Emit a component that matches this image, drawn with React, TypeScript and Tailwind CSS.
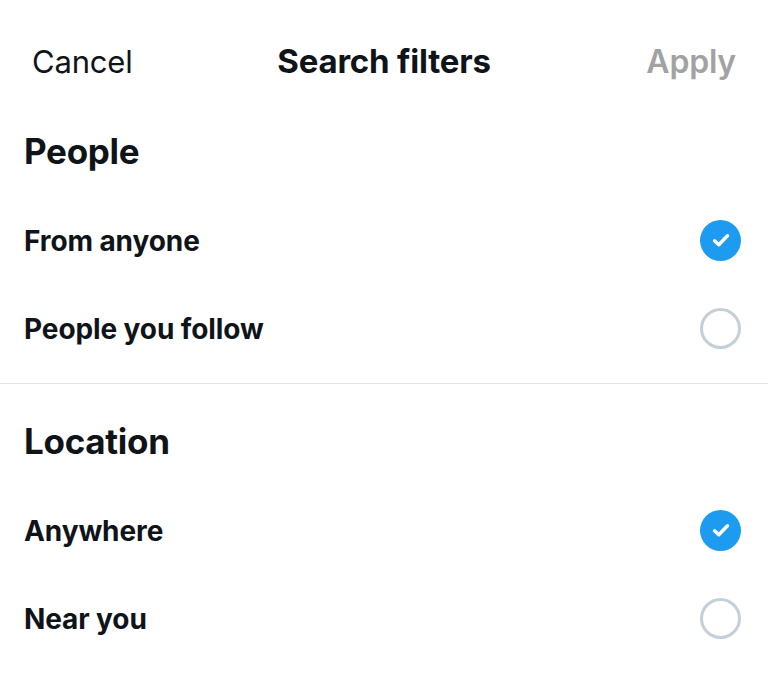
import React, { useState } from 'react';

const FONT = { fontFamily: 'Inter, "Noto Sans", "Liberation Sans", sans-serif' };

interface Option {
  id: string;
  label: string;
}

function Radio({ checked }: { checked: boolean }) {
  if (checked) {
    return (
      <span className="w-[41px] h-[41px] rounded-full bg-[#1d9bf0] flex items-center justify-center">
        <svg width="22" height="22" viewBox="0 0 22 22" fill="none">
          <path d="M4.5 11.8l4.3 3.9L17.5 6.8" stroke="white" strokeWidth="3.4" strokeLinecap="round" strokeLinejoin="round" />
        </svg>
      </span>
    );
  }
  return <span className="w-[41px] h-[41px] rounded-full border-[3px] border-[#c4cfd6]" />;
}

function Section({ title, options, value, onChange, top }: {
  title: string;
  options: Option[];
  value: string;
  onChange: (v: string) => void;
  top: string;
}) {
  return (
    <section className={top}>
      <h2 className="h-[54px] flex items-center px-6 text-[35px] font-bold text-[#0f1419] tracking-[-0.3px]">{title}</h2>
      <div className="mt-[18px]">
        {options.map(o => (
          <button key={o.id} onClick={() => onChange(o.id)}
            className="w-full h-[88px] flex items-center justify-between pl-6 pr-[27px] text-left">
            <span className="text-[28px] font-bold text-[#0f1419] tracking-[-0.1px] translate-y-px">{o.label}</span>
            <Radio checked={value === o.id} />
          </button>
        ))}
      </div>
    </section>
  );
}

export default function App() {
  const [people, setPeople] = useState('anyone');
  const [location, setLocation] = useState('anywhere');

  return (
    <div className="min-h-screen bg-white" style={FONT}>
      <header className="h-[124px] flex items-center justify-between px-8 relative">
        <button className="text-[31px] text-[#0f1419] tracking-[-0.2px]">Cancel</button>
        <h1 className="absolute left-1/2 -translate-x-1/2 text-[33px] font-bold text-[#0f1419] tracking-[-0.2px]">Search filters</h1>
        <button className="text-[32px] font-semibold text-[#a2a2a2] tracking-[-0.2px]">Apply</button>
      </header>

      <Section title="People" top="pb-[11px]" value={people} onChange={setPeople}
        options={[{ id: 'anyone', label: 'From anyone' }, { id: 'follow', label: 'People you follow' }]} />

      <div className="h-px bg-[#e1e4e8]" />

      <Section title="Location" top="pt-[30px]" value={location} onChange={setLocation}
        options={[{ id: 'anywhere', label: 'Anywhere' }, { id: 'near', label: 'Near you' }]} />
    </div>
  );
}
